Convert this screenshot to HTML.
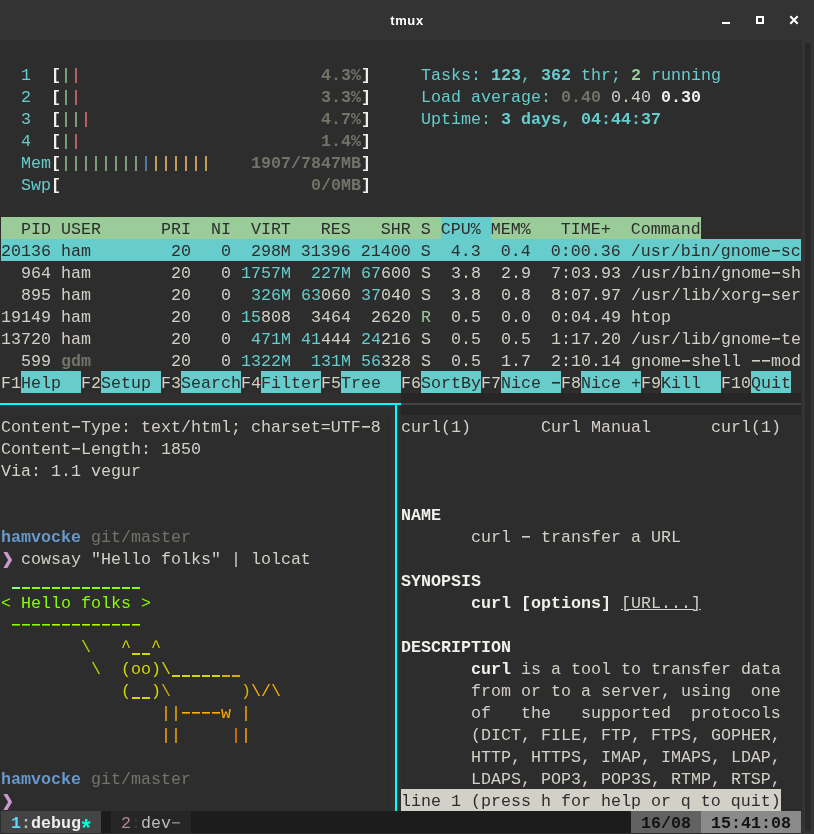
<!DOCTYPE html>
<html><head><meta charset="utf-8"><title>tmux</title>
<style>
html,body{margin:0;padding:0;}
body{width:814px;height:834px;overflow:hidden;background:#2d2d2d;position:relative;font-family:"Liberation Mono",monospace;}
#titlebar{position:absolute;left:0;top:0;width:814px;height:40px;background:#333333;}
#title{will-change:transform;position:absolute;left:0;top:0;width:814px;height:40px;line-height:40px;text-align:center;color:#ffffff;font:bold 13px/41px "Liberation Sans",sans-serif;letter-spacing:.6px;}
.wb{position:absolute;}
#sb{position:absolute;left:802px;top:40px;width:12px;height:794px;background:#343434;}
#sbt{position:absolute;left:3px;top:3px;width:6px;height:788px;background:#292929;}
#term{position:absolute;left:0;top:0;width:802px;height:834px;will-change:transform;}
.b{position:absolute;height:22px;}
.r{position:absolute;left:0;height:22px;line-height:22px;font-size:16.664px;white-space:pre;color:#d3d0c8;}
.r span{position:absolute;top:0;}
.B{font-weight:bold;}
.U{text-decoration:underline;}
</style></head><body>
<div id="titlebar"></div>
<div id="title">tmux</div>
<div class="wb" style="left:722px;top:22px;width:8px;height:2px;background:#fff"></div>
<div class="wb" style="left:756px;top:16px;width:4px;height:4px;border:2px solid #fff"></div>
<svg class="wb" style="left:788px;top:14px" width="12" height="12" viewBox="0 0 12 12"><path d="M2.3 2.3 L9.7 9.7 M9.7 2.3 L2.3 9.7" stroke="#fff" stroke-width="2" fill="none"/></svg>
<div id="sb"><div id="sbt"></div></div>
<div id="term">
<div class="b" style="left:1px;top:217px;width:700px;background:#99cc99"></div>
<div class="b" style="left:441px;top:217px;width:50px;background:#66cccc"></div>
<div class="b" style="left:1px;top:239px;width:800px;background:#66cccc"></div>
<div class="b" style="left:21px;top:371px;width:60px;background:#66cccc"></div>
<div class="b" style="left:101px;top:371px;width:60px;background:#66cccc"></div>
<div class="b" style="left:181px;top:371px;width:60px;background:#66cccc"></div>
<div class="b" style="left:261px;top:371px;width:60px;background:#66cccc"></div>
<div class="b" style="left:341px;top:371px;width:60px;background:#66cccc"></div>
<div class="b" style="left:421px;top:371px;width:60px;background:#66cccc"></div>
<div class="b" style="left:501px;top:371px;width:60px;background:#66cccc"></div>
<div class="b" style="left:581px;top:371px;width:60px;background:#66cccc"></div>
<div class="b" style="left:661px;top:371px;width:60px;background:#66cccc"></div>
<div class="b" style="left:751px;top:371px;width:40px;background:#66cccc"></div>
<div class="b" style="left:401px;top:789px;width:380px;background:#d3d0c8"></div>
<div class="b" style="left:1px;top:393px;width:400px;background:#303030"></div>
<div class="b" style="left:401px;top:393px;width:400px;background:#262626"></div>
<div class="b" style="left:391px;top:415px;width:10px;background:#303030"></div>
<div class="b" style="left:391px;top:437px;width:10px;background:#303030"></div>
<div class="b" style="left:391px;top:459px;width:10px;background:#303030"></div>
<div class="b" style="left:391px;top:481px;width:10px;background:#303030"></div>
<div class="b" style="left:391px;top:503px;width:10px;background:#303030"></div>
<div class="b" style="left:391px;top:525px;width:10px;background:#303030"></div>
<div class="b" style="left:391px;top:547px;width:10px;background:#303030"></div>
<div class="b" style="left:391px;top:569px;width:10px;background:#303030"></div>
<div class="b" style="left:391px;top:591px;width:10px;background:#303030"></div>
<div class="b" style="left:391px;top:613px;width:10px;background:#303030"></div>
<div class="b" style="left:391px;top:635px;width:10px;background:#303030"></div>
<div class="b" style="left:391px;top:657px;width:10px;background:#303030"></div>
<div class="b" style="left:391px;top:679px;width:10px;background:#303030"></div>
<div class="b" style="left:391px;top:701px;width:10px;background:#303030"></div>
<div class="b" style="left:391px;top:723px;width:10px;background:#303030"></div>
<div class="b" style="left:391px;top:745px;width:10px;background:#303030"></div>
<div class="b" style="left:391px;top:767px;width:10px;background:#303030"></div>
<div class="b" style="left:391px;top:789px;width:10px;background:#303030"></div>
<div class="b" style="left:1px;top:811px;width:800px;background:#1c1c1c"></div>
<div class="b" style="left:1px;top:811px;width:100px;background:#444444"></div>
<div class="b" style="left:111px;top:811px;width:80px;background:#262626"></div>
<div class="b" style="left:631px;top:811px;width:70px;background:#626262"></div>
<div class="b" style="left:701px;top:811px;width:100px;background:#8a8a8a"></div>
<div class="wb" style="left:0;top:403px;width:401px;height:2px;background:#00ffff"></div>
<div class="wb" style="left:401px;top:403px;width:400px;height:2px;background:#444444"></div>
<div class="wb" style="left:395px;top:403px;width:2px;height:408px;background:#00ffff"></div>
<div class="wb" style="left:772px;top:250px;width:8px;height:1px;background:#2d2d2d"></div>
<div class="wb" style="left:772px;top:251px;width:8px;height:1px;background:#2d2d2d;opacity:.6"></div>
<div class="wb" style="left:772px;top:272px;width:8px;height:1px;background:#d3d0c8"></div>
<div class="wb" style="left:772px;top:273px;width:8px;height:1px;background:#d3d0c8;opacity:.6"></div>
<div class="wb" style="left:762px;top:294px;width:8px;height:1px;background:#d3d0c8"></div>
<div class="wb" style="left:762px;top:295px;width:8px;height:1px;background:#d3d0c8;opacity:.6"></div>
<div class="wb" style="left:772px;top:338px;width:8px;height:1px;background:#d3d0c8"></div>
<div class="wb" style="left:772px;top:339px;width:8px;height:1px;background:#d3d0c8;opacity:.6"></div>
<div class="wb" style="left:682px;top:360px;width:8px;height:1px;background:#d3d0c8"></div>
<div class="wb" style="left:682px;top:361px;width:8px;height:1px;background:#d3d0c8;opacity:.6"></div>
<div class="wb" style="left:752px;top:360px;width:8px;height:1px;background:#d3d0c8"></div>
<div class="wb" style="left:752px;top:361px;width:8px;height:1px;background:#d3d0c8;opacity:.6"></div>
<div class="wb" style="left:762px;top:360px;width:8px;height:1px;background:#d3d0c8"></div>
<div class="wb" style="left:762px;top:361px;width:8px;height:1px;background:#d3d0c8;opacity:.6"></div>
<div class="wb" style="left:552px;top:382px;width:8px;height:1px;background:#2d2d2d"></div>
<div class="wb" style="left:552px;top:383px;width:8px;height:1px;background:#2d2d2d;opacity:.6"></div>
<div class="wb" style="left:72px;top:426px;width:8px;height:1px;background:#d3d0c8"></div>
<div class="wb" style="left:72px;top:427px;width:8px;height:1px;background:#d3d0c8;opacity:.6"></div>
<div class="wb" style="left:362px;top:426px;width:8px;height:1px;background:#d3d0c8"></div>
<div class="wb" style="left:362px;top:427px;width:8px;height:1px;background:#d3d0c8;opacity:.6"></div>
<div class="wb" style="left:72px;top:448px;width:8px;height:1px;background:#d3d0c8"></div>
<div class="wb" style="left:72px;top:449px;width:8px;height:1px;background:#d3d0c8;opacity:.6"></div>
<div class="wb" style="left:12px;top:587px;width:8px;height:2px;background:#87ff87"></div>
<div class="wb" style="left:22px;top:587px;width:8px;height:2px;background:#87ff00"></div>
<div class="wb" style="left:32px;top:587px;width:8px;height:2px;background:#87ff00"></div>
<div class="wb" style="left:42px;top:587px;width:8px;height:2px;background:#87ff00"></div>
<div class="wb" style="left:52px;top:587px;width:8px;height:2px;background:#87ff00"></div>
<div class="wb" style="left:62px;top:587px;width:8px;height:2px;background:#87ff00"></div>
<div class="wb" style="left:72px;top:587px;width:8px;height:2px;background:#87ff00"></div>
<div class="wb" style="left:82px;top:587px;width:8px;height:2px;background:#87ff00"></div>
<div class="wb" style="left:92px;top:587px;width:8px;height:2px;background:#87ff00"></div>
<div class="wb" style="left:102px;top:587px;width:8px;height:2px;background:#87ff00"></div>
<div class="wb" style="left:112px;top:587px;width:8px;height:2px;background:#87ff00"></div>
<div class="wb" style="left:122px;top:587px;width:8px;height:2px;background:#87ff00"></div>
<div class="wb" style="left:132px;top:587px;width:8px;height:2px;background:#87ff00"></div>
<div class="wb" style="left:12px;top:624px;width:8px;height:1px;background:#87ff00"></div>
<div class="wb" style="left:12px;top:625px;width:8px;height:1px;background:#87ff00;opacity:.6"></div>
<div class="wb" style="left:22px;top:624px;width:8px;height:1px;background:#87ff00"></div>
<div class="wb" style="left:22px;top:625px;width:8px;height:1px;background:#87ff00;opacity:.6"></div>
<div class="wb" style="left:32px;top:624px;width:8px;height:1px;background:#87ff00"></div>
<div class="wb" style="left:32px;top:625px;width:8px;height:1px;background:#87ff00;opacity:.6"></div>
<div class="wb" style="left:42px;top:624px;width:8px;height:1px;background:#87ff00"></div>
<div class="wb" style="left:42px;top:625px;width:8px;height:1px;background:#87ff00;opacity:.6"></div>
<div class="wb" style="left:52px;top:624px;width:8px;height:1px;background:#afff00"></div>
<div class="wb" style="left:52px;top:625px;width:8px;height:1px;background:#afff00;opacity:.6"></div>
<div class="wb" style="left:62px;top:624px;width:8px;height:1px;background:#afff00"></div>
<div class="wb" style="left:62px;top:625px;width:8px;height:1px;background:#afff00;opacity:.6"></div>
<div class="wb" style="left:72px;top:624px;width:8px;height:1px;background:#afff00"></div>
<div class="wb" style="left:72px;top:625px;width:8px;height:1px;background:#afff00;opacity:.6"></div>
<div class="wb" style="left:82px;top:624px;width:8px;height:1px;background:#afff00"></div>
<div class="wb" style="left:82px;top:625px;width:8px;height:1px;background:#afff00;opacity:.6"></div>
<div class="wb" style="left:92px;top:624px;width:8px;height:1px;background:#afff00"></div>
<div class="wb" style="left:92px;top:625px;width:8px;height:1px;background:#afff00;opacity:.6"></div>
<div class="wb" style="left:102px;top:624px;width:8px;height:1px;background:#afff00"></div>
<div class="wb" style="left:102px;top:625px;width:8px;height:1px;background:#afff00;opacity:.6"></div>
<div class="wb" style="left:112px;top:624px;width:8px;height:1px;background:#afff00"></div>
<div class="wb" style="left:112px;top:625px;width:8px;height:1px;background:#afff00;opacity:.6"></div>
<div class="wb" style="left:122px;top:624px;width:8px;height:1px;background:#afff00"></div>
<div class="wb" style="left:122px;top:625px;width:8px;height:1px;background:#afff00;opacity:.6"></div>
<div class="wb" style="left:132px;top:624px;width:8px;height:1px;background:#afff00"></div>
<div class="wb" style="left:132px;top:625px;width:8px;height:1px;background:#afff00;opacity:.6"></div>
<div class="wb" style="left:132px;top:653px;width:8px;height:2px;background:#d7d700"></div>
<div class="wb" style="left:142px;top:653px;width:8px;height:2px;background:#d7d700"></div>
<div class="wb" style="left:172px;top:675px;width:8px;height:2px;background:#d7d700"></div>
<div class="wb" style="left:182px;top:675px;width:8px;height:2px;background:#d7d700"></div>
<div class="wb" style="left:192px;top:675px;width:8px;height:2px;background:#d7d700"></div>
<div class="wb" style="left:202px;top:675px;width:8px;height:2px;background:#d7d700"></div>
<div class="wb" style="left:212px;top:675px;width:8px;height:2px;background:#d7d700"></div>
<div class="wb" style="left:222px;top:675px;width:8px;height:2px;background:#d7af00"></div>
<div class="wb" style="left:232px;top:675px;width:8px;height:2px;background:#d7af00"></div>
<div class="wb" style="left:132px;top:697px;width:8px;height:2px;background:#d7d700"></div>
<div class="wb" style="left:142px;top:697px;width:8px;height:2px;background:#d7d700"></div>
<div class="wb" style="left:182px;top:712px;width:8px;height:1px;background:#ffaf00"></div>
<div class="wb" style="left:182px;top:713px;width:8px;height:1px;background:#ffaf00;opacity:.6"></div>
<div class="wb" style="left:192px;top:712px;width:8px;height:1px;background:#ffaf00"></div>
<div class="wb" style="left:192px;top:713px;width:8px;height:1px;background:#ffaf00;opacity:.6"></div>
<div class="wb" style="left:202px;top:712px;width:8px;height:1px;background:#ffaf00"></div>
<div class="wb" style="left:202px;top:713px;width:8px;height:1px;background:#ffaf00;opacity:.6"></div>
<div class="wb" style="left:212px;top:712px;width:8px;height:1px;background:#ffaf00"></div>
<div class="wb" style="left:212px;top:713px;width:8px;height:1px;background:#ffaf00;opacity:.6"></div>
<div class="wb" style="left:522px;top:536px;width:8px;height:1px;background:#d3d0c8"></div>
<div class="wb" style="left:522px;top:537px;width:8px;height:1px;background:#d3d0c8;opacity:.6"></div>
<div class="wb" style="left:172px;top:822px;width:8px;height:1px;background:#808080"></div>
<div class="wb" style="left:172px;top:823px;width:8px;height:1px;background:#808080;opacity:.6"></div>
<svg class="wb" style="left:0;top:547px" width="16" height="22" viewBox="0 0 16 22"><path d="M3.4 5 L7.4 5 L12.1 13 L7.4 21 L3.4 21 L8.1 13 Z" fill="#cc99cc"/></svg>
<svg class="wb" style="left:0;top:789px" width="16" height="22" viewBox="0 0 16 22"><path d="M3.4 5 L7.4 5 L12.1 13 L7.4 21 L3.4 21 L8.1 13 Z" fill="#cc99cc"/></svg>
<div class="r" style="top:65px"><span style="left:21px;color:#66cccc;">1</span><span class="B" style="left:51px;color:#f2f0ec;">[</span><span style="left:61px;color:#99cc99;">|</span><span style="left:71px;color:#f2777a;">|</span><span class="B" style="left:321px;color:#747369;">4.3%</span><span class="B" style="left:361px;color:#f2f0ec;">]</span><span style="left:421px;color:#66cccc;">Tasks: </span><span class="B" style="left:491px;color:#66cccc;">123</span><span style="left:521px;color:#66cccc;">, </span><span class="B" style="left:541px;color:#66cccc;">362</span><span style="left:571px;color:#66cccc;"> thr; </span><span class="B" style="left:631px;color:#99cc99;">2</span><span style="left:641px;color:#66cccc;"> running</span></div>
<div class="r" style="top:87px"><span style="left:21px;color:#66cccc;">2</span><span class="B" style="left:51px;color:#f2f0ec;">[</span><span style="left:61px;color:#99cc99;">|</span><span style="left:71px;color:#f2777a;">|</span><span class="B" style="left:321px;color:#747369;">3.3%</span><span class="B" style="left:361px;color:#f2f0ec;">]</span><span style="left:421px;color:#66cccc;">Load average: </span><span class="B" style="left:561px;color:#747369;">0.40</span><span style="left:601px;"> 0.40</span><span style="left:651px;"> </span><span class="B" style="left:661px;color:#f2f0ec;">0.30</span></div>
<div class="r" style="top:109px"><span style="left:21px;color:#66cccc;">3</span><span class="B" style="left:51px;color:#f2f0ec;">[</span><span style="left:61px;color:#99cc99;">|</span><span style="left:71px;color:#99cc99;">|</span><span style="left:81px;color:#f2777a;">|</span><span class="B" style="left:321px;color:#747369;">4.7%</span><span class="B" style="left:361px;color:#f2f0ec;">]</span><span style="left:421px;color:#66cccc;">Uptime: </span><span class="B" style="left:501px;color:#66cccc;">3 days, 04:44:37</span></div>
<div class="r" style="top:131px"><span style="left:21px;color:#66cccc;">4</span><span class="B" style="left:51px;color:#f2f0ec;">[</span><span style="left:61px;color:#99cc99;">|</span><span style="left:71px;color:#f2777a;">|</span><span class="B" style="left:321px;color:#747369;">1.4%</span><span class="B" style="left:361px;color:#f2f0ec;">]</span></div>
<div class="r" style="top:153px"><span style="left:21px;color:#66cccc;">Mem</span><span class="B" style="left:51px;color:#f2f0ec;">[</span><span style="left:61px;color:#99cc99;">||||||||</span><span style="left:141px;color:#6699cc;">|</span><span style="left:151px;color:#ffcc66;">||||||</span><span class="B" style="left:251px;color:#747369;">1907/7847MB</span><span class="B" style="left:361px;color:#f2f0ec;">]</span></div>
<div class="r" style="top:175px"><span style="left:21px;color:#66cccc;">Swp</span><span class="B" style="left:51px;color:#f2f0ec;">[</span><span class="B" style="left:311px;color:#747369;">0/0MB</span><span class="B" style="left:361px;color:#f2f0ec;">]</span></div>
<div class="r" style="top:219px"><span style="left:1px;color:#2d2d2d;">  PID USER      PRI  NI  VIRT   RES   SHR S CPU% MEM%   TIME+  Command</span></div>
<div class="r" style="top:241px"><span style="left:1px;color:#2d2d2d;">20136 ham        20   0  298M 31396 21400 S  4.3  0.4  0:00.36 /usr/bin/gnome sc</span></div>
<div class="r" style="top:263px"><span style="left:1px;">  964</span><span style="left:61px;">ham</span><span style="left:171px;">20</span><span style="left:221px;">0</span><span style="left:241px;color:#66cccc;">1757M</span><span style="left:311px;color:#66cccc;">227M</span><span style="left:361px;color:#66cccc;">67</span><span style="left:381px;">600</span><span style="left:421px;">S</span><span style="left:451px;">3.8</span><span style="left:501px;">2.9</span><span style="left:551px;">7:03.93</span><span style="left:631px;">/usr/bin/gnome sh</span></div>
<div class="r" style="top:285px"><span style="left:1px;">  895</span><span style="left:61px;">ham</span><span style="left:171px;">20</span><span style="left:221px;">0</span><span style="left:251px;color:#66cccc;">326M</span><span style="left:301px;color:#66cccc;">63</span><span style="left:321px;">060</span><span style="left:361px;color:#66cccc;">37</span><span style="left:381px;">040</span><span style="left:421px;">S</span><span style="left:451px;">3.8</span><span style="left:501px;">0.8</span><span style="left:551px;">8:07.97</span><span style="left:631px;">/usr/lib/xorg ser</span></div>
<div class="r" style="top:307px"><span style="left:1px;">19149</span><span style="left:61px;">ham</span><span style="left:171px;">20</span><span style="left:221px;">0</span><span style="left:241px;color:#66cccc;">15</span><span style="left:261px;">808</span><span style="left:311px;">3464</span><span style="left:371px;">2620</span><span style="left:421px;color:#99cc99;">R</span><span style="left:451px;">0.5</span><span style="left:501px;">0.0</span><span style="left:551px;">0:04.49</span><span style="left:631px;">htop</span></div>
<div class="r" style="top:329px"><span style="left:1px;">13720</span><span style="left:61px;">ham</span><span style="left:171px;">20</span><span style="left:221px;">0</span><span style="left:251px;color:#66cccc;">471M</span><span style="left:301px;color:#66cccc;">41</span><span style="left:321px;">444</span><span style="left:361px;color:#66cccc;">24</span><span style="left:381px;">216</span><span style="left:421px;">S</span><span style="left:451px;">0.5</span><span style="left:501px;">0.5</span><span style="left:551px;">1:17.20</span><span style="left:631px;">/usr/lib/gnome te</span></div>
<div class="r" style="top:351px"><span style="left:1px;">  599</span><span class="B" style="left:61px;color:#747369;">gdm</span><span style="left:171px;">20</span><span style="left:221px;">0</span><span style="left:241px;color:#66cccc;">1322M</span><span style="left:311px;color:#66cccc;">131M</span><span style="left:361px;color:#66cccc;">56</span><span style="left:381px;">328</span><span style="left:421px;">S</span><span style="left:451px;">0.5</span><span style="left:501px;">1.7</span><span style="left:551px;">2:10.14</span><span style="left:631px;">gnome shell   mod</span></div>
<div class="r" style="top:373px"><span style="left:1px;">F1</span><span style="left:21px;color:#2d2d2d;">Help  </span><span style="left:81px;">F2</span><span style="left:101px;color:#2d2d2d;">Setup </span><span style="left:161px;">F3</span><span style="left:181px;color:#2d2d2d;">Search</span><span style="left:241px;">F4</span><span style="left:261px;color:#2d2d2d;">Filter</span><span style="left:321px;">F5</span><span style="left:341px;color:#2d2d2d;">Tree  </span><span style="left:401px;">F6</span><span style="left:421px;color:#2d2d2d;">SortBy</span><span style="left:481px;">F7</span><span style="left:501px;color:#2d2d2d;">Nice  </span><span style="left:561px;">F8</span><span style="left:581px;color:#2d2d2d;">Nice +</span><span style="left:641px;">F9</span><span style="left:661px;color:#2d2d2d;">Kill  </span><span style="left:721px;">F10</span><span style="left:751px;color:#2d2d2d;">Quit</span></div>
<div class="r" style="top:417px"><span style="left:1px;">Content Type: text/html; charset=UTF 8</span><span style="left:401px;">curl(1)</span><span style="left:541px;">Curl Manual</span><span style="left:711px;">curl(1)</span></div>
<div class="r" style="top:439px"><span style="left:1px;">Content Length: 1850</span></div>
<div class="r" style="top:461px"><span style="left:1px;">Via: 1.1 vegur</span></div>
<div class="r" style="top:505px"><span class="B" style="left:401px;color:#f2f0ec;">NAME</span></div>
<div class="r" style="top:527px"><span class="B" style="left:1px;color:#6699cc;">hamvocke</span><span style="left:81px;"> </span><span style="left:91px;color:#747369;">git/master</span><span style="left:471px;">curl   transfer a URL</span></div>
<div class="r" style="top:549px"><span style="left:21px;">cowsay &quot;Hello folks&quot; | lolcat</span></div>
<div class="r" style="top:571px"><span style="left:11px;color:#87ff87;"> </span><span style="left:21px;color:#87ff00;">            </span><span class="B" style="left:401px;color:#f2f0ec;">SYNOPSIS</span></div>
<div class="r" style="top:593px"><span style="left:1px;color:#87ff00;">&lt; Hello folks &gt;</span><span class="B" style="left:471px;color:#f2f0ec;">curl [options]</span><span style="left:611px;"> </span><span class="U" style="left:621px;">[URL...]</span></div>
<div class="r" style="top:615px"><span style="left:11px;color:#87ff00;">    </span><span style="left:51px;color:#afff00;">         </span></div>
<div class="r" style="top:637px"><span style="left:81px;color:#afd700;">\</span><span style="left:121px;color:#d7d700;">^  ^</span><span class="B" style="left:401px;color:#f2f0ec;">DESCRIPTION</span></div>
<div class="r" style="top:659px"><span style="left:91px;color:#afd700;">\</span><span style="left:121px;color:#d7d700;">(oo)\     </span><span style="left:221px;color:#d7af00;">  </span><span class="B" style="left:471px;color:#f2f0ec;">curl</span><span style="left:511px;"> is a tool to transfer data</span></div>
<div class="r" style="top:681px"><span style="left:121px;color:#d7d700;">(  )</span><span style="left:161px;color:#d7af00;">\</span><span style="left:241px;color:#d7af00;">)</span><span style="left:251px;color:#ffaf00;">\/\</span><span style="left:471px;">from or to a server, using  one</span></div>
<div class="r" style="top:703px"><span style="left:161px;color:#ffaf00;">||    w</span><span style="left:241px;color:#ffaf00;">|</span><span style="left:471px;">of   the   supported  protocols</span></div>
<div class="r" style="top:725px"><span style="left:161px;color:#ffaf00;">||</span><span style="left:231px;color:#ff8700;">|</span><span style="left:241px;color:#ffaf00;">|</span><span style="left:471px;">(DICT, FILE, FTP, FTPS, GOPHER,</span></div>
<div class="r" style="top:747px"><span style="left:471px;">HTTP, HTTPS, IMAP, IMAPS, LDAP,</span></div>
<div class="r" style="top:769px"><span class="B" style="left:1px;color:#6699cc;">hamvocke</span><span style="left:81px;"> </span><span style="left:91px;color:#747369;">git/master</span><span style="left:471px;">LDAPS, POP3, POP3S, RTMP, RTSP,</span></div>
<div class="r" style="top:791px"><span style="left:401px;color:#2d2d2d;">line 1 (press h for help or q to quit)</span></div>
<div class="r" style="top:813px"><span class="B" style="left:11px;color:#5fd7ff;">1</span><span class="B" style="left:21px;color:#bcbcbc;">:</span><span class="B" style="left:31px;color:#eeeeee;">debug</span><span class="B" style="left:81px;color:#00ffd7;top:7px;font-size:23px;margin-left:-1.7px;">*</span><span style="left:121px;color:#af8787;">2</span><span style="left:131px;color:#3a3a3a;">:</span><span style="left:141px;color:#bcbcbc;">dev</span><span style="left:171px;color:#808080;"> </span><span class="B" style="left:641px;color:#121212;">16/08</span><span class="B" style="left:711px;color:#121212;">15:41:08</span></div>
</div></body></html>
